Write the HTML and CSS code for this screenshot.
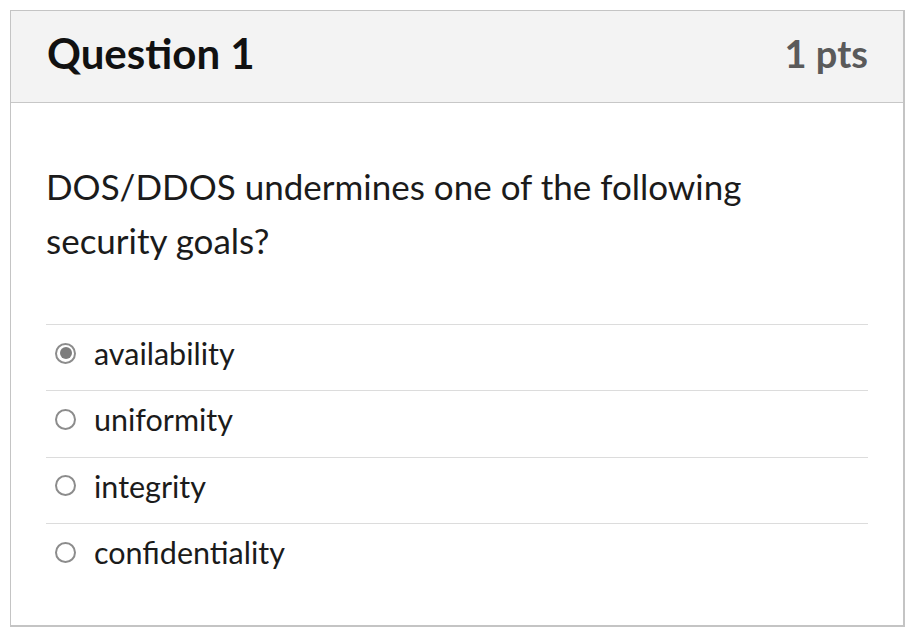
FILE: index.html
```html
<!DOCTYPE html>
<html>
<head>
<meta charset="utf-8">
<link rel="stylesheet" href="styles.css">
</head>
<body>
<div class="card">
  <div class="header">
    <h2 class="title">Question 1</h2>
    <span class="pts">1 pts</span>
  </div>
  <div class="content">
    <p class="question">DOS/DDOS undermines one of the following security goals?</p>
    <div class="answers">
      <label class="answer"><span class="radio checked"></span><span class="label">availability</span></label>
      <label class="answer"><span class="radio"></span><span class="label">uniformity</span></label>
      <label class="answer"><span class="radio"></span><span class="label">integrity</span></label>
      <label class="answer"><span class="radio"></span><span class="label">confidentiality</span></label>
    </div>
  </div>
</div>
</body>
</html>
```
FILE: styles.css
```css
html, body {
  margin: 0;
  padding: 0;
  background: #ffffff;
}
body {
  padding: 10px 5px 8px 10px;
  font-family: Lato, "Open Sans", sans-serif;
  color: #1b1b1b;
}
.card {
  border: 1px solid #c4c4c4;
  border-width: 1px 2px 2px 1px;
  box-sizing: border-box;
  height: 617px;
}
.header {
  background: #f3f3f3;
  border-bottom: 1px solid #c7c7c7;
  height: 92px;
  box-sizing: border-box;
  display: flex;
  align-items: center;
  justify-content: space-between;
  padding: 0 35px 8px 36px;
}
.title {
  margin: 0;
  font-size: 42px;
  font-weight: 700;
  color: #111;
}
.pts {
  font-size: 38px;
  font-weight: 700;
  color: #5a5a5a;
}
.content {
  padding: 56px 35px 0 35px;
}
.question {
  margin: 0 0 57px 0;
  font-size: 35px;
  line-height: 54px;
  width: 780px;
}
.answers {
  border-top: 1px solid #dcdcdc;
}
.answer {
  display: flex;
  align-items: center;
  padding-bottom: 9px;
  height: 56.3px;
  border-bottom: 1px solid #dcdcdc;
  font-size: 30.5px;
}
.answer:last-child {
  border-bottom: none;
}
.radio {
  width: 21px;
  height: 21px;
  border: 2px solid #8c8c8c;
  border-radius: 50%;
  margin: 0 18px 0 9px;
  box-sizing: border-box;
  position: relative;
  background: #fff;
  flex: none;
}
.radio.checked::after {
  content: "";
  position: absolute;
  left: 2.5px;
  top: 2.5px;
  width: 12px;
  height: 12px;
  border-radius: 50%;
  background: #7d7d7d;
}
```
